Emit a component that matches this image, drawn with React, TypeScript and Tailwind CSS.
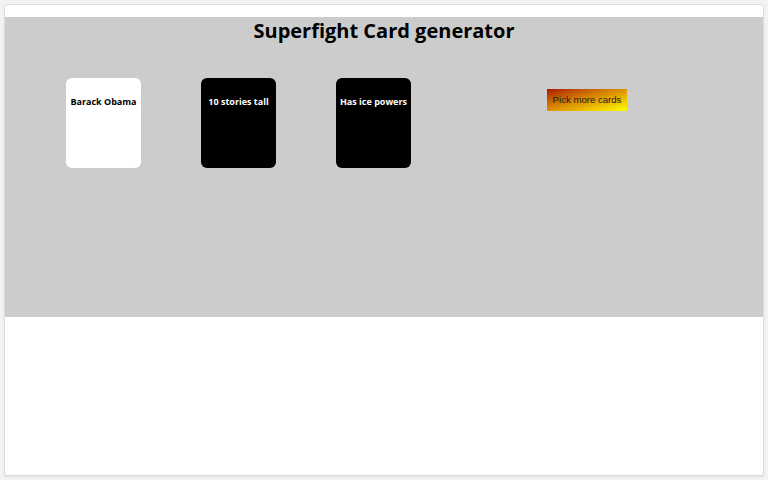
import React from "react";

function Card({ text, dark }: { text: string; dark?: boolean }) {
  return (
    <div
      className={
        "ml-[60px] w-[75px] h-[90px] rounded-[6px] pt-[18px] text-center text-[9px] font-bold leading-[11px] " +
        (dark ? "bg-black text-white" : "bg-white text-black")
      }
      style={{ fontFamily: '"Open Sans", sans-serif' }}
    >
      {text}
    </div>
  );
}

export default function App() {
  return (
    <div className="w-[768px] h-[480px] bg-[#f3f3f3] pt-[4px] px-[4px]">
      <div className="w-[760px] h-[472px] bg-white border border-[#dcdcdc] rounded-[3px] pt-[12px] shadow-[0_1px_2px_rgba(0,0,0,0.08)]">
        <div className="h-[300px] bg-[#cccccc]">
          <h1
            className="text-center text-[20px] font-bold leading-[28px] text-black"
            style={{ fontFamily: '"Open Sans", sans-serif' }}
          >
            Superfight Card generator
          </h1>
          <div className="flex items-start mt-[33px] pl-[1px]">
            <Card text="Barack Obama" />
            <Card text="10 stories tall" dark />
            <Card text="Has ice powers" dark />
            <button
              className="ml-[136px] mt-[11px] w-[80px] h-[22px] bg-gradient-to-br from-[#a80800] to-[#ffff00] text-[9.6px] text-[#1a1a1a] leading-[22px] text-center"
              style={{ fontFamily: '"Liberation Sans", Arial, sans-serif' }}
            >
              Pick more cards
            </button>
          </div>
        </div>
      </div>
    </div>
  );
}
